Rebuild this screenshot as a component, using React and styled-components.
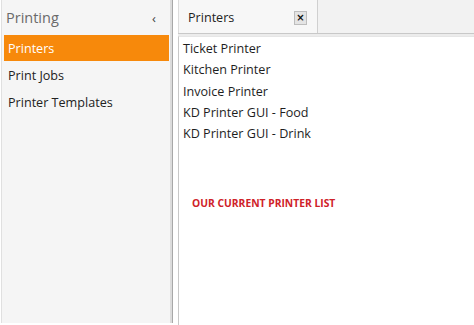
import React from 'react'
import styled, { createGlobalStyle } from 'styled-components'

const GlobalStyle = createGlobalStyle`
    html, body {
        margin: 0;
        padding: 0;
        background: #ffffff;
        font-family: "Open Sans", "Noto Sans", sans-serif;
    }
`

const Root = styled.div`
    display: flex;
    width: 474px;
    height: 325px;
    overflow: hidden;
    background: #ffffff;
`

const Sidebar = styled.div`
    width: 168px;
    height: 323px;
    margin-left: 1px;
    background: #f5f5f5;
    border-left: 1px solid #e0e0e0;
    display: flex;
    flex-direction: column;
`

const SidebarHeader = styled.div`
    display: flex;
    align-items: center;
    justify-content: space-between;
    height: 35px;
    padding: 0 14px 0 4px;
    font-size: 14.5px;
    color: #6a6a6a;
`

const Chevron = styled.span`
    font-size: 13px;
    color: #444;
`

const NavItem = styled.div`
    height: 26px;
    margin: 0 1px 1px 2px;
    display: flex;
    align-items: center;
    padding-left: 4px;
    font-size: 12.6px;
    color: ${p => (p.active ? '#ffffff' : '#222222')};
    background: ${p => (p.active ? '#f7890b' : 'transparent')};
`

const Splitter = styled.div`
    width: 8px;
    height: 323px;
    display: flex;
    justify-content: space-between;
    border-left: 2px solid #dcdcdc;
    box-sizing: border-box;
    &::after {
        content: '';
        width: 1px;
        background: #a8a8a8;
    }
`

const Main = styled.div`
    flex: 1;
    display: flex;
    flex-direction: column;
    min-width: 0;
`

const TabStrip = styled.div`
    height: 33px;
    display: flex;
    background: #f2f2f2;
    border-bottom: 1px solid #c8c8c8;
    box-shadow: 0 2px 0 #ececec;
`

const Tab = styled.div`
    width: 140px;
    display: flex;
    align-items: center;
    justify-content: space-between;
    padding: 2px 10px 0 9px;
    box-sizing: border-box;
    background: #f7f7f7;
    border-left: 1px solid #dcdcdc;
    border-right: 1px solid #d0d0d0;
    font-size: 12.6px;
    color: #222;
`

const CloseBox = styled.span`
    width: 11px;
    height: 12px;
    display: flex;
    align-items: center;
    justify-content: center;
    background: #e4e4e4;
    border: 1px solid #bdbdbd;
    font-size: 10px;
    font-weight: bold;
    color: #111;
    font-family: "DejaVu Sans", sans-serif;
`

const Content = styled.div`
    flex: 1;
    margin-top: 2px;
    padding: 1px 0 0 4px;
    border-left: 1px solid #c8c8c8;
    border-top: 1px solid #e6e6e6;
    background: #ffffff;
`

const PrinterRow = styled.div`
    height: 21.3px;
    display: flex;
    align-items: center;
    font-size: 12.6px;
    color: #1e1e1e;
`

const Note = styled.div`
    margin: 52px 0 0 9px;
    font-size: 10.3px;
    font-weight: bold;
    color: #cf2229;
`

const navItems = ['Printers', 'Print Jobs', 'Printer Templates']
const printers = [
    'Ticket Printer',
    'Kitchen Printer',
    'Invoice Printer',
    'KD Printer GUI - Food',
    'KD Printer GUI - Drink',
]

export default function App() {
    return (
        <Root>
            <GlobalStyle />
            <Sidebar>
                <SidebarHeader>
                    Printing
                    <Chevron>‹</Chevron>
                </SidebarHeader>
                {navItems.map((item, i) => (
                    <NavItem key={item} active={i === 0}>{item}</NavItem>
                ))}
            </Sidebar>
            <Splitter />
            <Main>
                <TabStrip>
                    <Tab>
                        Printers
                        <CloseBox>×</CloseBox>
                    </Tab>
                </TabStrip>
                <Content>
                    {printers.map(p => (
                        <PrinterRow key={p}>{p}</PrinterRow>
                    ))}
                    <Note>OUR CURRENT PRINTER LIST</Note>
                </Content>
            </Main>
        </Root>
    )
}
